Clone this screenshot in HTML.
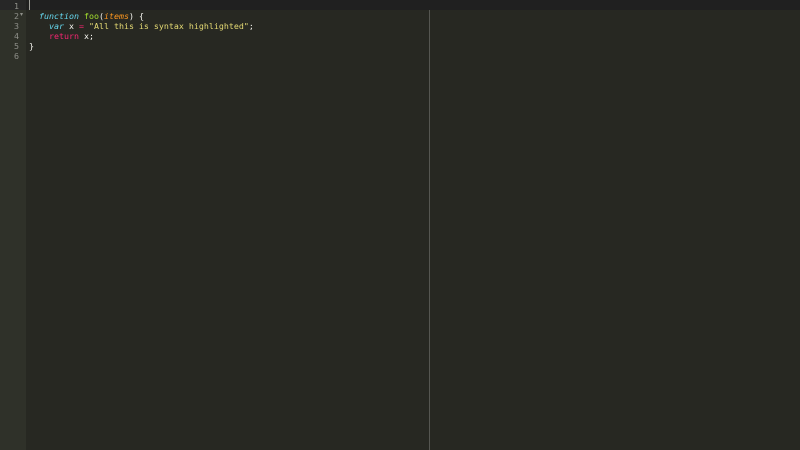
<!DOCTYPE html>
<html><head><meta charset="utf-8"><style>
html,body{margin:0;padding:0;width:800px;height:450px;overflow:hidden;background:#272822;}
.g{position:absolute;left:0;top:0;width:26px;height:450px;background:#2F3129;}
.al{position:absolute;left:26px;top:0;width:774px;height:10px;background:#202020;}
.ag{position:absolute;left:0;top:0;width:26px;height:10px;background:#272727;}
.pm{position:absolute;left:429px;top:10px;width:1px;height:440px;background:#555651;}
.ln{position:absolute;left:0;width:19px;text-align:right;color:#8F908A;font:8.3px/10px "DejaVu Sans Mono","Liberation Mono",monospace;}
.code{position:absolute;left:29px;top:0;font:8.3px/10px "DejaVu Sans Mono","Liberation Mono",monospace;color:#F8F8F2;white-space:pre;}
.ln,.code{padding-top:1px}
.cur{position:absolute;left:29px;top:0;width:1px;height:10px;background:#F8F8F0;opacity:.6}
.k{color:#66D9EF;font-style:italic}.f{color:#A6E22E;font-style:normal}.p{color:#FD971F;font-style:italic}
.s{color:#E6DB74}.r{color:#F92672}.o{color:#F92672}
.fold{position:absolute;left:20px;top:12px;font:6px/1 "DejaVu Sans",sans-serif;color:#8F908A}
</style></head><body>
<div class="g"></div><div class="ag"></div><div class="al"></div><div class="pm"></div>
<div class="ln" style="top:0">1</div><div class="ln" style="top:10px">2</div><div class="ln" style="top:20px">3</div><div class="ln" style="top:30px">4</div><div class="ln" style="top:40px">5</div><div class="ln" style="top:50px">6</div>
<div class="fold">▾</div>
<div class="cur"></div>
<div class="code">
  <span class="k">function</span> <span class="f">foo</span>(<span class="p">items</span>) {
    <span class="k">var</span> x <span class="o">=</span> <span class="s">"All this is syntax highlighted"</span>;
    <span class="r">return</span> x;
}
</div>
</body></html>
